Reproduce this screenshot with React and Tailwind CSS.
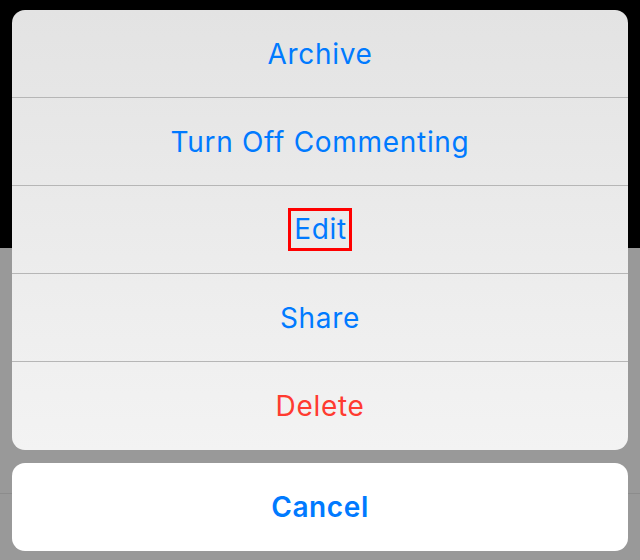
export default function App() {
  const rows = [
    { label: "Archive", color: "text-[#007aff]" },
    { label: "Turn Off Commenting", color: "text-[#007aff]" },
    { label: "Edit", color: "text-[#007aff]", boxed: true },
    { label: "Share", color: "text-[#007aff]" },
    { label: "Delete", color: "text-[#ff3b30]" },
  ];
  return (
    <div
      className="w-[640px] h-[560px] overflow-hidden px-[12px] pt-[10px] flex flex-col bg-[linear-gradient(to_bottom,#000_0px,#000_248px,#999999_248px,#999999_493px,#8c8c8c_493px,#8c8c8c_494px,#999999_494px)]"
      style={{ fontFamily: "Inter, 'Noto Sans', sans-serif" }}
    >
      <div className="rounded-[13px] overflow-hidden bg-[linear-gradient(to_bottom,#e3e3e3,#f3f3f3)] flex flex-col">
        {rows.map((r, i) => (
          <div
            key={r.label}
            className={`${i === 4 ? "h-[88px]" : "h-[87px]"} flex items-center justify-center ${i > 0 ? "border-t border-[#b6b6b6]" : ""} box-content`}
          >
            {r.boxed ? (
              <span className={`${r.color} text-[28px] tracking-[0.7px] leading-none border-[3px] border-[#ff0000] pl-[3px] pr-[2px] pt-[4px] pb-[5px]`}>
                {r.label}
              </span>
            ) : (
              <span className={`${r.color} text-[28px] tracking-[0.7px] leading-none`}>{r.label}</span>
            )}
          </div>
        ))}
      </div>
      <div className="mt-[13px] h-[88px] rounded-[13px] bg-white flex items-center justify-center">
        <span className="text-[#007aff] text-[28px] tracking-[0.6px] font-semibold leading-none">Cancel</span>
      </div>
    </div>
  );
}
